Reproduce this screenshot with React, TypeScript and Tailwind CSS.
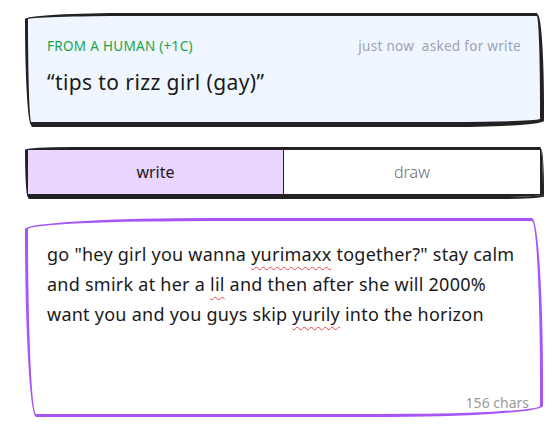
import React from 'react';

const sketchy = 'rounded-[255px_15px_225px_15px/15px_225px_15px_255px]';

const Squiggle = ({ children }: { children: React.ReactNode }) => (
  <span className="underline decoration-wavy decoration-[#e5484d] decoration-1 underline-offset-[5px]">
    {children}
  </span>
);

export default function App() {
  return (
    <div
      className="min-h-screen bg-white pl-[25px] pr-[17px] pt-[13px] pb-3 text-[#1f1f1f] flex flex-col"
      style={{ fontFamily: '"Noto Sans", "Open Sans", sans-serif' }}
    >
      {/* request card */}
      <section
        className={`h-[112px] border-[3px] border-[#222] bg-[#eff6ff] px-[19px] pt-[20px] shadow-[1px_2px_0_#222] ${sketchy}`}
      >
        <div className="flex items-center justify-between">
          <span className="text-[13.5px] tracking-[0.3px] text-[#1aa34a]">FROM A HUMAN (+1C)</span>
          <span className="text-[13.5px] tracking-[0.3px] text-[#9ca3af]">
            just now&nbsp;&nbsp;asked for write
          </span>
        </div>
        <p className="mt-[12px] text-[21px] leading-[28px] tracking-[0.4px] text-[#1a1a1a]">“tips to rizz girl (gay)”</p>
      </section>

      {/* mode tabs */}
      <div
        className={`mt-[22px] h-[50px] grid grid-cols-2 overflow-hidden border-[3px] border-[#222] shadow-[1px_2px_0_#222] ${sketchy}`}
      >
        <button className="bg-[#e9d5ff] border-r border-[#222] text-[16px] text-[#1a1a1a]">write</button>
        <button className="bg-white text-[16px] font-light text-[#6b6b7b]">draw</button>
      </div>

      {/* answer */}
      <div
        className={`relative mt-[21px] h-[199px] border-[3px] border-[#a855f7] bg-white px-[19px] pt-[18px] ${sketchy}`}
      >
        <div className="text-[18px] leading-[30px] text-[#1a1a1a] tracking-[0.25px]">
          <div>
            go "hey girl you wanna <Squiggle>yurimaxx</Squiggle> together?" stay calm
          </div>
          <div>
            and smirk at her a <Squiggle>lil</Squiggle> and then after she will 2000%
          </div>
          <div>
            want you and you guys skip <Squiggle>yurily</Squiggle> into the horizon
          </div>
        </div>
        <span className="absolute right-[11px] bottom-[1px] text-[14px] text-[#9a9a9a]">156 chars</span>
      </div>
    </div>
  );
}
